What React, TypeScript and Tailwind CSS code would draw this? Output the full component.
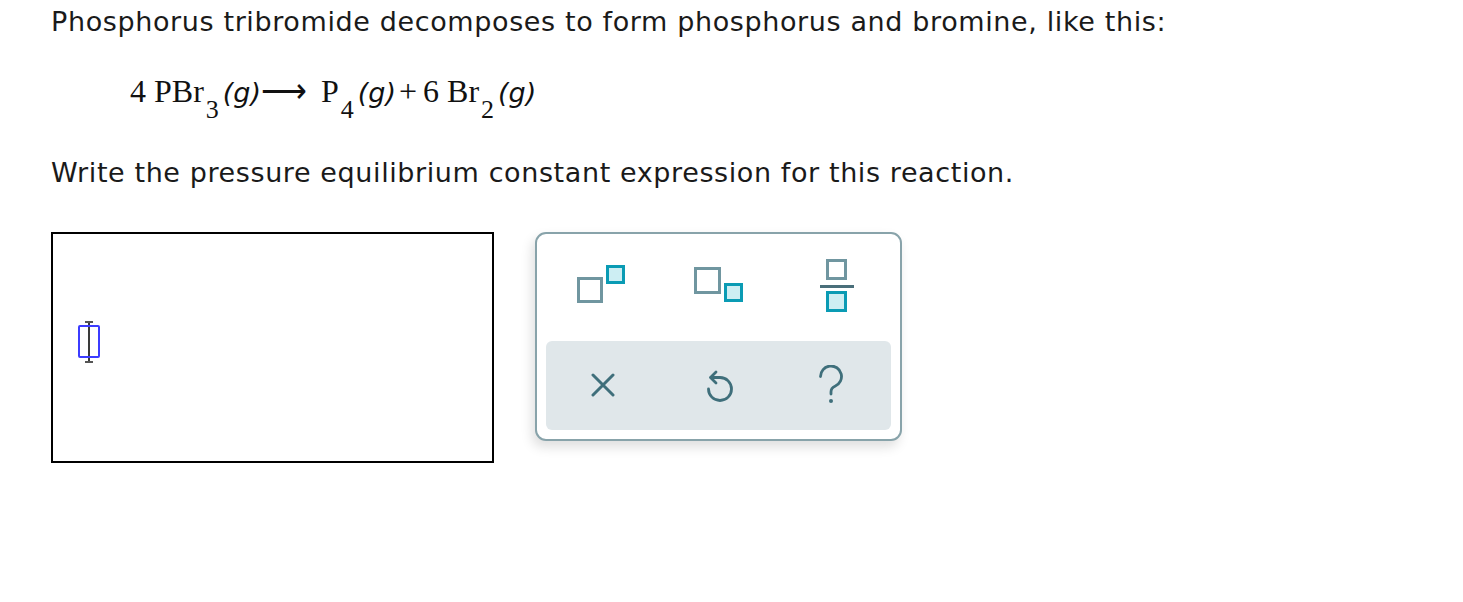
const sans = { fontFamily: '"DejaVu Sans", Verdana, sans-serif' };

function G() {
  return <span className="italic font-['DejaVu_Sans',sans-serif] text-[27px] leading-[36px]">(g)</span>;
}

function Sub({ n }: { n: string }) {
  return (
    <span className="relative top-[16px] font-['Liberation_Serif',serif] text-[26px] leading-[36px] ml-[2px] mr-[4px]">
      {n}
    </span>
  );
}

function SuperIcon() {
  return (
    <svg width="48" height="38" viewBox="0 0 48 38">
      <rect x="1.5" y="13.5" width="23" height="23" fill="none" stroke="#7096a0" strokeWidth="3" />
      <rect x="30.5" y="1.5" width="16" height="16" fill="#cdeef3" stroke="#0a9bb4" strokeWidth="3" />
    </svg>
  );
}

function SubIcon() {
  return (
    <svg width="49" height="35" viewBox="0 0 49 35">
      <rect x="1.5" y="1.5" width="24" height="24" fill="none" stroke="#7096a0" strokeWidth="3" />
      <rect x="31.5" y="17.5" width="16" height="16" fill="#cdeef3" stroke="#0a9bb4" strokeWidth="3" />
    </svg>
  );
}

function FracIcon() {
  return (
    <svg width="34" height="53" viewBox="0 0 34 53">
      <rect x="7.5" y="1.5" width="18" height="18" fill="none" stroke="#7096a0" strokeWidth="3" />
      <rect x="0" y="26" width="34" height="3" fill="#4a6f7a" />
      <rect x="7.5" y="33.5" width="18" height="18" fill="#cdeef3" stroke="#0a9bb4" strokeWidth="3" />
    </svg>
  );
}

function ClearIcon() {
  return (
    <svg width="24" height="24" viewBox="0 0 24 24">
      <path d="M2 2 L22 22 M22 2 L2 22" stroke="#3f6f7b" strokeWidth="3" strokeLinecap="round" />
    </svg>
  );
}

function UndoIcon() {
  return (
    <svg width="30" height="35" viewBox="0 0 30 35">
      <path d="M4.5 21 A11.5 11.5 0 1 0 16 9.5 L7 9.5" fill="none" stroke="#3f6f7b" strokeWidth="2.8" strokeLinecap="round" />
      <path d="M12 4 L6.5 9.5 L12 15" fill="none" stroke="#3f6f7b" strokeWidth="2.8" strokeLinecap="round" strokeLinejoin="round" />
    </svg>
  );
}

function HelpIcon() {
  return (
    <svg width="26" height="40" viewBox="0 0 26 40">
      <path d="M2.5 11.5 A10.5 10.5 0 1 1 17 21.2 Q13 23 13 27 L13 29" fill="none" stroke="#3f6f7b" strokeWidth="2.8" strokeLinecap="round" />
      <circle cx="13" cy="36" r="2" fill="#3f6f7b" />
    </svg>
  );
}

export default function App() {
  return (
    <div className="min-h-screen bg-white text-[#1a1a1a] pl-[51px] pt-[4px]" style={sans}>
      <p className="text-[27px] leading-[36px] tracking-[0.62px]">
        Phosphorus tribromide decomposes to form phosphorus and bromine, like this:
      </p>

      <div className="pl-[79px] mt-[33px] h-[36px] whitespace-nowrap font-['Liberation_Serif',serif] text-[32px] leading-[36px] text-[#111]">
        4 PBr<Sub n="3" /><G />
        <span className="mr-[14px]">⟶</span>P<Sub n="4" /><G />
        <span className="ml-[3px] mr-[6px]">+</span>6 Br<Sub n="2" /><G />
      </div>

      <p className="text-[27px] leading-[36px] tracking-[0.6px] mt-[46px]">
        Write the pressure equilibrium constant expression for this reaction.
      </p>

      <div className="flex items-start gap-[41px] mt-[41px]">
        <div className="w-[443px] h-[231px] border-2 border-black pl-[25px] pt-[87px]">
          <div className="relative w-[22px] h-[42px] flex justify-center">
            <div className="absolute left-0 top-[4px] w-[22px] h-[33px] border-[2.5px] border-[#3c3cff] rounded-[2px]" />
            <div className="w-[2.5px] h-[42px] bg-[#3a3a3a]" />
            <div className="absolute top-0 w-[8px] h-[2px] bg-[#555]" />
            <div className="absolute bottom-0 w-[8px] h-[2px] bg-[#555]" />
          </div>
        </div>

        <div className="w-[367px] h-[209px] rounded-[11px] border-2 border-[#88a3aa] bg-white shadow-[-3px_6px_12px_rgba(0,0,0,0.13)] p-[9px] flex flex-col">
          <div className="h-[98px] flex items-start">
            <div className="ml-[31px] mt-[22px]"><SuperIcon /></div>
            <div className="ml-[69px] mt-[24px]"><SubIcon /></div>
            <div className="ml-[77px] mt-[16px]"><FracIcon /></div>
          </div>
          <div className="flex-1 rounded-[6px] bg-[#e0e7ea] flex items-start">
            <div className="ml-[45px] mt-[32px]"><ClearIcon /></div>
            <div className="ml-[89px] mt-[27px]"><UndoIcon /></div>
            <div className="ml-[84px] mt-[24px]"><HelpIcon /></div>
          </div>
        </div>
      </div>
    </div>
  );
}
